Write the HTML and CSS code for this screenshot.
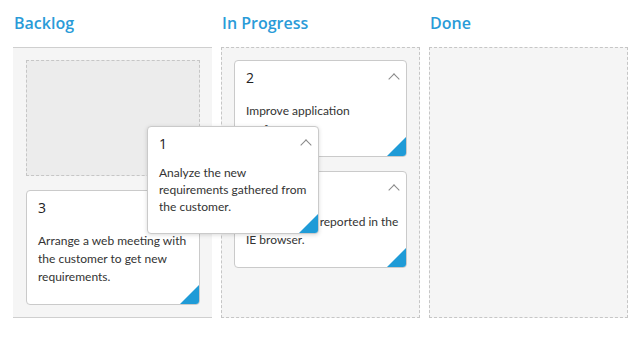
FILE: index.html
```html
<!DOCTYPE html>
<html lang="en">
<head>
  <meta charset="UTF-8">
  <meta name="viewport" content="width=device-width, initial-scale=1.0">
  <title>Kanban Board</title>
  <link rel="stylesheet" href="styles.css">
</head>
<body>

<div class="board">
  <section class="column">
    <h2 class="column-title">Backlog</h2>
    <div class="column-body">
      <div class="drop-placeholder"></div>
      <div class="card">
        <div class="card-header">
          <span class="card-id">3</span>
        </div>
        <p class="card-content">Arrange a web meeting with the customer to get new requirements.</p>
      </div>
    </div>
  </section>

  <section class="column">
    <h2 class="column-title">In Progress</h2>
    <div class="column-body drop-target">
      <div class="card">
        <div class="card-header">
          <span class="card-id">2</span>
          <span class="card-toggle"></span>
        </div>
        <p class="card-content">Improve application performance</p>
      </div>
      <div class="card">
        <div class="card-header">
          <span class="card-id">4</span>
          <span class="card-toggle"></span>
        </div>
        <p class="card-content">Fix the issues reported in the IE browser.</p>
      </div>
    </div>
  </section>

  <section class="column">
    <h2 class="column-title">Done</h2>
    <div class="column-body drop-target"></div>
  </section>

  <!-- card being dragged -->
  <div class="card card-dragged">
    <div class="card-header">
      <span class="card-id">1</span>
      <span class="card-toggle"></span>
    </div>
    <p class="card-content">Analyze the new requirements gathered from the customer.</p>
  </div>
</div>

</body>
</html>
```

FILE: styles.css
```css
body {
  margin: 0;
  padding: 13px 8px 13px 13px;
  font-family: "Segoe UI", "Open Sans", sans-serif;
  color: #333;
  background: #fff;
}
.board {
  position: relative;
  display: flex;
  gap: 9px;
}
.column {
  width: 199px;
  flex-shrink: 0;
}
.column-title {
  margin: 0;
  height: 34px;
  padding-left: 1px;
  font-size: 16px;
  font-weight: 600;
  line-height: 20px;
  color: #2a9bd8;
}
.column-body {
  height: 271px;
  box-sizing: border-box;
  padding: 12px 12px 12px 13px;
  background: #f5f5f5;
  border-top: 1px solid #cfcfcf;
  border-bottom: 1px solid #cfcfcf;
  display: flex;
  flex-direction: column;
  gap: 14px;
}
.column-body.drop-target {
  border: 1px dashed #c6c6c6;
  padding: 12px;
}
.drop-placeholder {
  height: 116px;
  box-sizing: border-box;
  background: #ececec;
  border: 1px dashed #c6c6c6;
  flex-shrink: 0;
}
.card {
  position: relative;
  background: #fff;
  border: 1px solid #cacaca;
  border-radius: 4px;
  padding: 5px 7px 18px 11px;
  overflow: hidden;
  flex-shrink: 0;
}
.card::after {
  content: "";
  position: absolute;
  right: 0;
  bottom: 0;
  border-left: 19px solid transparent;
  border-bottom: 19px solid #1f9bd7;
}
.card-header {
  display: flex;
  justify-content: space-between;
  align-items: center;
  height: 22px;
}
.card-id {
  font-size: 14px;
  color: #222;
}
.card-toggle {
  width: 7px;
  height: 7px;
  margin: 4px 1px 0 0;
  border-left: 1px solid #888;
  border-top: 1px solid #888;
  transform: rotate(45deg);
}
.card-content {
  margin: 14px 0 0;
  font-family: Lato, "Open Sans", sans-serif;
  font-size: 12px;
  line-height: 18px;
}
.card-dragged {
  position: absolute;
  left: 134px;
  top: 113px;
  width: 152px;
  box-shadow: 0 1px 4px rgba(0, 0, 0, 0.15);
}
.card-dragged .card-content {
  margin-top: 10px;
  line-height: 17px;
}
```
